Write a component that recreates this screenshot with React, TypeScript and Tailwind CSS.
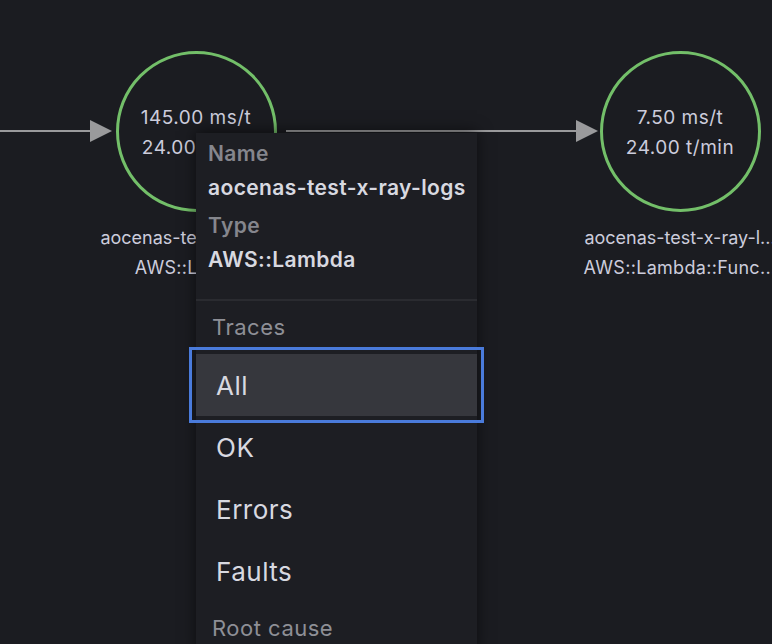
type GraphNode = {
  id: string;
  cx: number;
  latency: string;
  rate: string;
  name: string;
  type: string;
};

const NODES: GraphNode[] = [
  {
    id: "logs",
    cx: 196,
    latency: "145.00 ms/t",
    rate: "24.00 t/min",
    name: "aocenas-test-x-ray-l...",
    type: "AWS::Lambda",
  },
  {
    id: "fn",
    cx: 680,
    latency: "7.50 ms/t",
    rate: "24.00 t/min",
    name: "aocenas-test-x-ray-l...",
    type: "AWS::Lambda::Func...",
  },
];

const TRACE_OPTIONS = ["All", "OK", "Errors", "Faults"];

function Edges() {
  return (
    <svg className="absolute left-0 top-0" width={772} height={644}>
      <line x1={0} y1={131} x2={94} y2={131} stroke="#9a9a9c" strokeWidth={2} />
      <polygon points="90,120 112,131 90,142" fill="#9a9a9c" />
      <line x1={286} y1={131} x2={580} y2={131} stroke="#9a9a9c" strokeWidth={2} />
      <polygon points="576,120 598,131 576,142" fill="#9a9a9c" />
    </svg>
  );
}

function Node({ node }: { node: GraphNode }) {
  return (
    <div className="absolute top-[51px] w-[260px]" style={{ left: node.cx - 130 }}>
      <div className="mx-auto flex h-[161px] w-[161px] flex-col items-center justify-center rounded-full border-[3px] border-[#73bf69] pt-[3px] text-[19px] leading-[30px] tracking-[0.5px] text-[#ccccdc]">
        <span>{node.latency}</span>
        <span>{node.rate}</span>
      </div>
      <div className="mt-[11px] flex flex-col items-center whitespace-nowrap text-[18px] leading-[30px] text-[#ccccdc]">
        <span>{node.name}</span>
        <span className="tracking-[0.3px]">{node.type}</span>
      </div>
    </div>
  );
}

function ContextMenu() {
  return (
    <div className="absolute left-[196px] top-[133px] h-[520px] w-[281px] bg-[#1d1e23] shadow-[0_-2px_14px_rgba(0,0,0,0.55)]">
      <div className="flex flex-col gap-2 whitespace-nowrap px-3 pb-6 pt-[6px] text-[21px] font-semibold leading-[30px] tracking-[0.4px]">
        <div className="flex flex-col gap-1">
          <span className="text-[#85868d]">Name</span>
          <span className="text-[#d8d9e0]">aocenas-test-x-ray-logs</span>
        </div>
        <div className="flex flex-col gap-1">
          <span className="text-[#85868d]">Type</span>
          <span className="text-[#d8d9e0]">AWS::Lambda</span>
        </div>
      </div>
      <div className="h-[2px] bg-[#2a2b30]" />
      <div className="flex h-[53px] items-center px-4 text-[22px] tracking-[0.5px] text-[#8e8f96]">Traces</div>
      {TRACE_OPTIONS.map((label, i) => (
        <div
          key={label}
          className={
            i === 0
              ? "flex h-[62px] items-center bg-[#36373d] px-5 text-[26px] tracking-[0.5px] text-[#d8d9e0] outline-[3px] outline-offset-[4px] outline-[#4a7bdb] outline-solid"
              : "flex h-[62px] items-center px-5 text-[26px] tracking-[0.5px] text-[#d8d9e0]"
          }
        >
          {label}
        </div>
      ))}
      <div className="flex h-[52px] items-center px-4 text-[22px] tracking-[0.5px] text-[#8e8f96]">Root cause</div>
    </div>
  );
}

export default function App() {
  return (
    <div
      className="relative h-[644px] w-[772px] overflow-hidden bg-[#1b1c21]"
      style={{ fontFamily: "Inter, 'Noto Sans', sans-serif" }}
    >
      <Edges />
      {NODES.map((node) => (
        <Node key={node.id} node={node} />
      ))}
      <ContextMenu />
    </div>
  );
}
